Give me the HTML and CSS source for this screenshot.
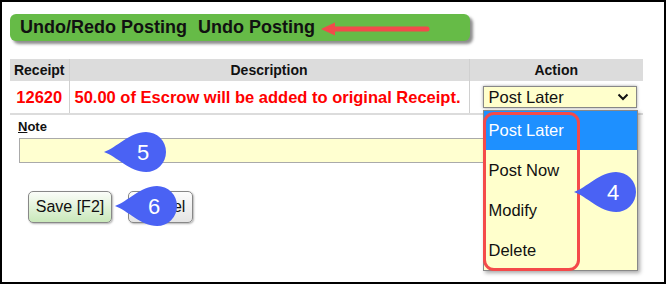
FILE: index.html
```html
<!DOCTYPE html>
<html lang="en">
<head>
    <meta charset="UTF-8">
    <title>Undo/Redo Posting</title>
    <link rel="stylesheet" href="styles.css">
</head>
<body>
    <div class="frame">
        <div class="title-bar">
            <span>Undo/Redo Posting</span>
            <span class="sub">Undo Posting</span>
            <svg class="title-arrow" width="112" height="16" viewBox="0 0 112 16">
                <path d="M0 8 L14 1.5 L14 14.5 Z" fill="#f24b4b"/>
                <line x1="10" y1="8" x2="106" y2="8" stroke="#f24b4b" stroke-width="5" stroke-linecap="round"/>
            </svg>
        </div>

        <table class="posting">
            <colgroup>
                <col class="w-receipt">
                <col class="w-desc">
                <col class="w-action">
            </colgroup>
            <thead>
                <tr>
                    <th>Receipt</th>
                    <th>Description</th>
                    <th>Action</th>
                </tr>
            </thead>
            <tbody>
                <tr>
                    <td class="col-receipt">12620</td>
                    <td class="col-desc">50.00 of Escrow will be added to original Receipt.</td>
                    <td class="col-action">
                        <div class="select-wrap">
                            <div class="select">
                                <span>Post Later</span>
                                <svg width="12" height="8" viewBox="0 0 12 8">
                                    <path d="M1.5 1.5 L6 6 L10.5 1.5" fill="none" stroke="#111" stroke-width="2"/>
                                </svg>
                            </div>
                            <ul class="options">
                                <li class="selected">Post Later</li>
                                <li>Post Now</li>
                                <li>Modify</li>
                                <li>Delete</li>
                                <div class="highlight-box"></div>
                            </ul>
                        </div>
                    </td>
                </tr>
            </tbody>
        </table>

        <div class="note">
            <label for="note"><u>N</u>ote</label>
            <div class="note-input" id="note"></div>
        </div>

        <div class="buttons">
            <button class="btn btn-save">Save [F2]</button>
            <button class="btn btn-cancel">Cancel</button>
        </div>

        <!-- numbered callouts -->
        <svg class="callout c5" width="66" height="44" viewBox="0 0 66 44">
            <path d="M2 22 C14 18 28 2 44 2 A20 20 0 1 1 44 42 C28 42 14 26 2 22 Z" fill="#4a62f4"/>
            <text x="41" y="30" text-anchor="middle">5</text>
        </svg>
        <svg class="callout c6" width="66" height="44" viewBox="0 0 66 44">
            <path d="M2 22 C14 18 28 2 44 2 A20 20 0 1 1 44 42 C28 42 14 26 2 22 Z" fill="#4a62f4"/>
            <text x="41" y="30" text-anchor="middle">6</text>
        </svg>
        <svg class="callout c4" width="66" height="44" viewBox="0 0 66 44">
            <path d="M2 22 C14 18 28 2 44 2 A20 20 0 1 1 44 42 C28 42 14 26 2 22 Z" fill="#4a62f4"/>
            <text x="41" y="30" text-anchor="middle">4</text>
        </svg>
    </div>
</body>
</html>
```

FILE: styles.css
```css
body {
    margin: 0;
    font-family: "Liberation Sans", Arial, sans-serif;
    background-color: #fff;
}

.frame {
    position: relative;
    width: 666px;
    height: 284px;
    box-sizing: border-box;
    border: 2px solid #000;
    padding: 12px 0 0 8px;
    overflow: hidden;
}

/* green heading */
.title-bar {
    display: flex;
    align-items: center;
    width: 450px;
    height: 27px;
    padding-left: 10px;
    background-color: #66bb47;
    border-radius: 6px;
    box-shadow: 3px 3px 3px rgba(0, 0, 0, 0.45);
    font-size: 18px;
    font-weight: bold;
    color: #111;
}

.title-bar .sub {
    margin-left: 11px;
}

.title-arrow {
    margin-left: 6px;
    margin-top: 2px;
}

/* table */
.posting {
    margin-top: 18px;
    width: 633px;
    border-collapse: collapse;
    table-layout: fixed;
}

.w-receipt { width: 59px; }
.w-desc { width: 400px; }
.w-action { width: 174px; }

.posting th {
    background-color: #dcdcdc;
    height: 22px;
    padding: 0;
    font-size: 14px;
    font-weight: bold;
    color: #111;
    text-align: center;
}

.posting td {
    height: 32px;
    padding: 0 0 0 5px;
    border-bottom: 2px solid #dcdcdc;
    font-size: 16.5px;
    font-weight: bold;
    color: #ff0000;
    text-align: left;
    white-space: nowrap;
}

.posting th + th,
.posting td + td {
    border-left: 1px solid #d0d0d0;
}

.posting td.col-receipt {
    padding: 0;
    text-align: center;
}

.posting td.col-action {
    padding: 0 6px 0 13px;
}

.select-wrap {
    position: relative;
}

.select {
    display: flex;
    align-items: center;
    justify-content: space-between;
    height: 22px;
    box-sizing: border-box;
    padding: 0 7px 0 5px;
    background-color: #ffffcc;
    border: 1px solid #888;
    box-shadow: 0 0 3px rgba(0, 0, 0, 0.35);
    font-size: 16.5px;
    font-weight: normal;
    color: #111;
}

/* open dropdown list */
.options {
    position: absolute;
    top: 24px;
    left: 0;
    width: 155px;
    box-sizing: border-box;
    margin: 0;
    padding: 0;
    list-style: none;
    background-color: #ffffcc;
    border: 1px solid #888;
    box-shadow: 2px 2px 4px rgba(0, 0, 0, 0.35);
    z-index: 2;
}

.options li {
    height: 40px;
    line-height: 40px;
    padding-left: 5px;
    font-size: 16.5px;
    font-weight: normal;
    color: #111;
}

.options li.selected {
    background-color: #1e90ff;
    color: #fff;
    height: 39px;
    line-height: 38px;
}

.highlight-box {
    position: absolute;
    top: 1px;
    left: -1px;
    width: 97px;
    height: 159px;
    box-sizing: border-box;
    border: 3px solid #f44a4a;
    border-radius: 11px;
}

/* note */
.note {
    margin-top: 3px;
    padding-left: 8px;
}

.note label {
    display: block;
    font-size: 13px;
    font-weight: bold;
    color: #111;
    height: 20px;
    line-height: 18px;
}

.note-input {
    width: 614px;
    height: 25px;
    box-sizing: border-box;
    margin-left: 1px;
    background-color: #ffffd0;
    border: 1px solid #aaa;
}

.buttons {
    display: flex;
    gap: 16px;
    margin-top: 28px;
    padding-left: 18px;
}

.btn {
    height: 32px;
    padding: 0 6px;
    border: 1px solid #888;
    border-radius: 5px;
    font-family: "Liberation Sans", Arial, sans-serif;
    font-size: 16px;
    color: #111;
    box-shadow: 1px 1px 2px rgba(0, 0, 0, 0.3);
}

.btn-save {
    width: 84px;
    background: linear-gradient(#fbfdf9, #c9e8ba);
}

.btn-cancel {
    width: 65px;
    background: linear-gradient(#fdfdfd, #e4e4e4);
}

/* callouts */
.callout {
    position: absolute;
    z-index: 3;
}

.callout text {
    font-family: "Liberation Sans", Arial, sans-serif;
    font-size: 22px;
    fill: #fff;
}

.c5 {
    left: 100px;
    top: 128px;
}

.c6 {
    left: 111px;
    top: 182px;
}

.c4 {
    left: 570px;
    top: 168px;
}
```
